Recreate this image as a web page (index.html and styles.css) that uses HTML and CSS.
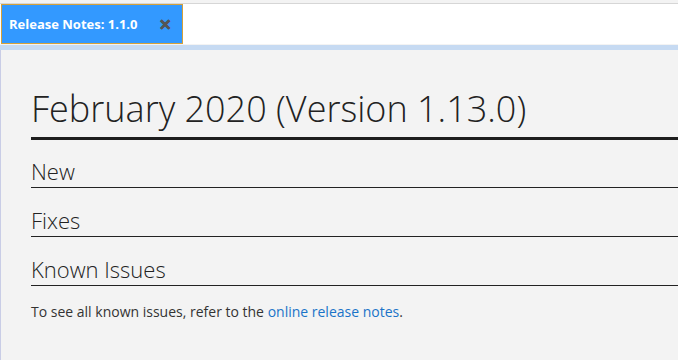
FILE: index.html
```html
<!DOCTYPE html>
<html lang="en">
<head>
    <meta charset="UTF-8">
    <title>Release Notes: 1.1.0</title>
    <link rel="stylesheet" href="styles.css">
</head>
<body>
    <div class="tab-bar">
        <div class="tab active">
            <span class="tab-title">Release Notes: 1.1.0</span>
            <span class="tab-close">&#x2715;</span>
        </div>
    </div>
    <div class="tab-strip"></div>

    <div class="content">
        <h1>February 2020 (Version 1.13.0)</h1>
        <h2>New</h2>
        <h2>Fixes</h2>
        <h2>Known Issues</h2>
        <p>To see all known issues, refer to the <a href="#">online release notes</a>.</p>
    </div>
</body>
</html>
```

FILE: styles.css
```css
body {
    margin: 0;
    font-family: 'Open Sans', sans-serif;
    background-color: #f3f3f3;
    height: 100vh;
    display: flex;
    flex-direction: column;
}

.tab-bar {
    background-color: #fff;
    border-top: 1px solid #d6d6d6;
    margin-top: 3px;
    display: flex;
    padding-left: 1px;
}

.tab {
    display: flex;
    align-items: center;
    justify-content: space-between;
    width: 182px;
    height: 40px;
    box-sizing: border-box;
    padding: 0 10px 0 7px;
    background-color: #3399ff;
    border: 1px solid #d4a13a;
}

.tab-title {
    color: #fff;
    font-weight: bold;
    font-size: 13px;
}

.tab-close {
    color: #555;
    font-size: 15px;
    font-weight: bold;
    -webkit-text-stroke: 0.6px #555;
}

.tab-strip {
    height: 5px;
    margin-top: 1px;
    background-color: #c6daf2;
}

.content {
    flex: 1;
    border-left: 1px solid #c9cde6;
    padding: 35px 0 0 30px;
}

h1 {
    font-weight: 300;
    font-size: 36px;
    color: #222;
    margin: 0;
    padding-bottom: 4px;
    border-bottom: 3px solid #1e1e1e;
    line-height: 48px;
}

h2 {
    font-weight: 300;
    font-size: 22px;
    color: #222;
    margin: 17px 0 0 0;
    line-height: 31px;
    border-bottom: 1px solid #222;
}

h1 + h2 {
    margin-top: 16px;
}

p {
    font-size: 14px;
    color: #333;
    margin: 16px 0 0 0;
    line-height: 19px;
}

a {
    color: #1a73c8;
    text-decoration: none;
}
```
